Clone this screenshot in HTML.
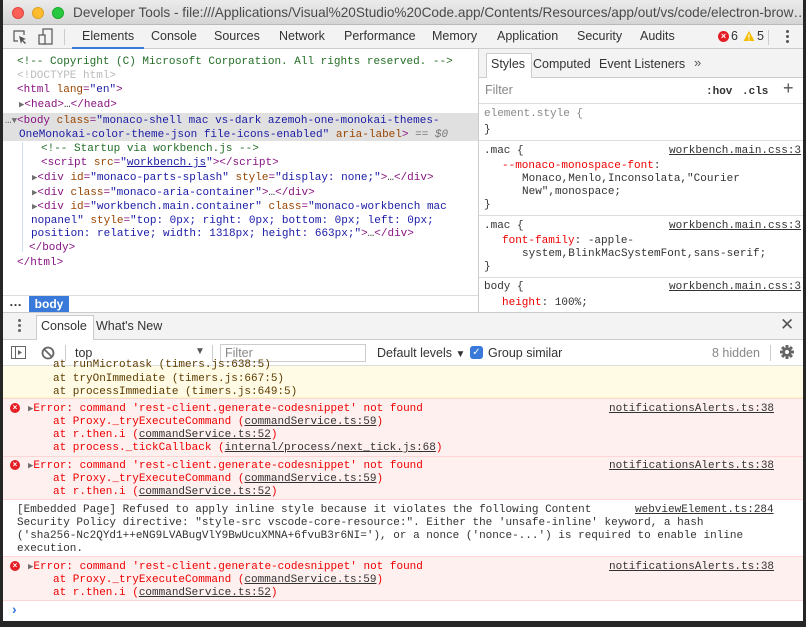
<!DOCTYPE html>
<html><head><meta charset="utf-8">
<style>
*{box-sizing:border-box;margin:0;padding:0}
body{width:806px;height:627px;background:#262626;overflow:hidden;position:relative;font-family:"Liberation Sans",sans-serif;font-size:12px;color:#333}
.a{position:absolute;white-space:pre}
.m{font-family:"Liberation Mono",monospace;font-size:11px;line-height:14px;height:14px;padding-top:1px}
.win{position:absolute;left:3px;top:0;width:800px;height:621px;background:#fff;overflow:hidden}
.t{color:#881280}.n{color:#994500}.v{color:#1a1aa6}.c{color:#236e25}.g{color:#a894a6}
.r{color:#e00}.u{text-decoration:underline}
.tri{font-size:9px;color:#6e6e6e}
.sec{position:absolute;left:476px;width:324px;border-bottom:1px solid #ddd}
.lk{color:#333;text-decoration:underline}
</style></head><body>
<div class="win">
<!-- title bar -->
<div class="a" style="left:0;top:0;width:800px;height:25px;background:linear-gradient(#ebebeb,#d5d5d5);border-bottom:1px solid #b9b9b9"></div>
<div class="a" style="left:9px;top:7px;width:12px;height:12px;border-radius:6px;background:#fc5f57;border:1px solid #e0443e"></div>
<div class="a" style="left:29px;top:7px;width:12px;height:12px;border-radius:6px;background:#fdbc2e;border:1px solid #dea123"></div>
<div class="a" style="left:49px;top:7px;width:12px;height:12px;border-radius:6px;background:#28c840;border:1px solid #1aab29"></div>
<div class="a" style="left:70px;top:5px;font-size:13.6px;color:#4a4a4a">Developer Tools - file:///Applications/Visual%20Studio%20Code.app/Contents/Resources/app/out/vs/code/electron-brow…</div>
<!-- tab bar -->
<div class="a" style="left:0;top:25px;width:800px;height:24px;background:#f3f3f3;border-bottom:1px solid #ccc"></div>
<svg class="a" style="left:9px;top:29px" width="16" height="16" viewBox="0 0 16 16"><path d="M6 12H2V2h10v4" fill="none" stroke="#555" stroke-width="1.2"/><path d="M7 7l7 3-3 1 3 3-1 1-3-3-1 3z" fill="#555"/></svg>
<svg class="a" style="left:35px;top:28px" width="16" height="18" viewBox="0 0 16 18"><rect x="5" y="1" width="9" height="15" fill="none" stroke="#555" stroke-width="1.2"/><rect x="1" y="7" width="6" height="9" fill="#f3f3f3" stroke="#555" stroke-width="1.2"/></svg>
<div class="a" style="left:61px;top:29px;width:1px;height:16px;background:#ccc"></div>
<div class="a" style="left:79px;top:29px;font-size:12.5px;color:#333">Elements</div>
<div class="a" style="left:69px;top:47px;width:72px;height:2px;background:#3879d9"></div>
<div class="a" style="left:148px;top:29px;font-size:12.5px;color:#333">Console</div>
<div class="a" style="left:211px;top:29px;font-size:12.5px;color:#333">Sources</div>
<div class="a" style="left:276px;top:29px;font-size:12.5px;color:#333">Network</div>
<div class="a" style="left:341px;top:29px;font-size:12.5px;color:#333">Performance</div>
<div class="a" style="left:429px;top:29px;font-size:12.5px;color:#333">Memory</div>
<div class="a" style="left:494px;top:29px;font-size:12.5px;color:#333">Application</div>
<div class="a" style="left:574px;top:29px;font-size:12.5px;color:#333">Security</div>
<div class="a" style="left:637px;top:29px;font-size:12.5px;color:#333">Audits</div>
<div class="a" style="left:715px;top:31px;width:11px;height:11px;border-radius:6px;background:#e31e25;color:#fff;font-size:9px;line-height:11px;text-align:center;font-weight:bold">×</div>
<div class="a" style="left:728px;top:29px;font-size:12.5px">6</div>
<svg class="a" style="left:740px;top:30px" width="12" height="12"><path d="M6 1L11.5 11H.5z" fill="#f4bd00"/><text x="6" y="10.5" font-size="8" text-anchor="middle" fill="#fff" font-family="Liberation Sans" font-weight="bold">!</text></svg>
<div class="a" style="left:754px;top:29px;font-size:12.5px">5</div>
<div class="a" style="left:765px;top:30px;width:1px;height:15px;background:#ccc"></div>
<div class="a" style="left:783px;top:30px;width:3px;height:3px;border-radius:2px;background:#555;box-shadow:0 5px #555,0 10px #555"></div>
<!-- elements panel -->
<div class="a" style="left:0;top:113px;width:475px;height:28px;background:#e0e0e0"></div>
<div class="a m c" style="left:14px;top:54px">&lt;!-- Copyright (C) Microsoft Corporation. All rights reserved. --&gt;</div>
<div class="a m" style="left:14px;top:68px;color:#bbb">&lt;!DOCTYPE html&gt;</div>
<div class="a m" style="left:14px;top:82px"><span class="t">&lt;html</span> <span class="n">lang</span><span class="t">=</span><span class="v">"en"</span><span class="t">&gt;</span></div>
<div class="a m" style="left:16px;top:97px"><span class="tri">▶</span><span class="t">&lt;head&gt;</span>…<span class="t">&lt;/head&gt;</span></div>
<div class="a m" style="left:2px;top:113px;color:#666">…<span class="tri">▼</span><span class="t">&lt;body</span> <span class="n">class</span><span class="t">=</span><span class="v">"monaco-shell mac vs-dark azemoh-one-monokai-themes-</span></div>
<div class="a m" style="left:16px;top:127px"><span class="v">OneMonokai-color-theme-json file-icons-enabled"</span> <span class="n">aria-label</span><span class="t">&gt;</span> <span style="color:#777">== <i>$0</i></span></div>
<div class="a" style="left:19px;top:142px;width:1px;height:110px;background:#cfe0f7"></div>
<div class="a m c" style="left:38px;top:141px">&lt;!-- Startup via workbench.js --&gt;</div>
<div class="a m" style="left:38px;top:155px"><span class="t">&lt;script</span> <span class="n">src</span><span class="t">=</span><span class="v">"<span class="u" style="color:#1a1aa6">workbench.js</span>"</span><span class="t">&gt;&lt;/script&gt;</span></div>
<div class="a m" style="left:29px;top:170px"><span class="tri">▶</span><span class="t">&lt;div</span> <span class="n">id</span><span class="t">=</span><span class="v">"monaco-parts-splash"</span> <span class="n">style</span><span class="t">=</span><span class="v">"display: none;"</span><span class="t">&gt;</span>…<span class="t">&lt;/div&gt;</span></div>
<div class="a m" style="left:29px;top:185px"><span class="tri">▶</span><span class="t">&lt;div</span> <span class="n">class</span><span class="t">=</span><span class="v">"monaco-aria-container"</span><span class="t">&gt;</span>…<span class="t">&lt;/div&gt;</span></div>
<div class="a m" style="left:29px;top:199px"><span class="tri">▶</span><span class="t">&lt;div</span> <span class="n">id</span><span class="t">=</span><span class="v">"workbench.main.container"</span> <span class="n">class</span><span class="t">=</span><span class="v">"monaco-workbench mac</span></div>
<div class="a m v" style="left:28px;top:213px">nopanel" <span class="n">style</span><span class="t">=</span>"top: 0px; right: 0px; bottom: 0px; left: 0px;</div>
<div class="a m v" style="left:28px;top:226px">position: relative; width: 1318px; height: 663px;"<span class="t">&gt;</span><span style="color:#333">…</span><span class="t">&lt;/div&gt;</span></div>
<div class="a m t" style="left:26px;top:240px">&lt;/body&gt;</div>
<div class="a m t" style="left:14px;top:255px">&lt;/html&gt;</div>
<!-- breadcrumb -->
<div class="a" style="left:0;top:295px;width:476px;height:1px;background:#ddd"></div>
<div class="a" style="left:6px;top:294px;font-size:13px;font-weight:bold;color:#333">…</div>
<div class="a" style="left:26px;top:296px;width:40px;height:16px;background:#3879d9;color:#fff;font-size:12px;line-height:16px;text-align:center;font-weight:bold">body</div>
<!-- splitter -->
<div class="a" style="left:475px;top:49px;width:1px;height:263px;background:#ccc"></div>
<!-- styles pane -->
<div class="a" style="left:476px;top:49px;width:324px;height:29px;background:#f3f3f3;border-bottom:1px solid #ccc"></div>
<div class="a" style="left:483px;top:53px;width:46px;height:25px;background:#fff;border:1px solid #ccc;border-bottom:none"></div>
<div class="a" style="left:488px;top:57px;font-size:12.5px">Styles</div>
<div class="a" style="left:530px;top:57px;font-size:12.5px">Computed</div>
<div class="a" style="left:596px;top:57px;font-size:12.5px">Event Listeners</div>
<div class="a" style="left:691px;top:55px;font-size:13px;color:#555">»</div>
<div class="sec" style="top:78px;height:26px"></div>
<div class="a" style="left:482px;top:83px;font-size:12.5px;color:#888">Filter</div>
<div class="a m" style="left:703px;top:84px;font-weight:bold;color:#333">:hov</div>
<div class="a m" style="left:739px;top:84px;font-weight:bold;color:#333">.cls</div>
<div class="a" style="left:780px;top:78px;font-size:18px;color:#555">+</div>
<div class="sec" style="top:104px;height:37px"></div>
<div class="a m" style="left:481px;top:106px;color:#888">element.style {</div>
<div class="a m" style="left:481px;top:122px">}</div>
<div class="sec" style="top:141px;height:75px"></div>
<div class="a m" style="left:481px;top:143px">.mac {</div>
<div class="a m lk" style="left:666px;top:143px">workbench.main.css:3</div>
<div class="a m" style="left:499px;top:158px"><span class="r">--monaco-monospace-font</span>:</div>
<div class="a m" style="left:519px;top:171px">Monaco,Menlo,Inconsolata,"Courier</div>
<div class="a m" style="left:519px;top:184px">New",monospace;</div>
<div class="a m" style="left:481px;top:197px">}</div>
<div class="sec" style="top:216px;height:62px"></div>
<div class="a m" style="left:481px;top:218px">.mac {</div>
<div class="a m lk" style="left:666px;top:218px">workbench.main.css:3</div>
<div class="a m" style="left:499px;top:233px"><span class="r">font-family</span>: -apple-</div>
<div class="a m" style="left:519px;top:246px">system,BlinkMacSystemFont,sans-serif;</div>
<div class="a m" style="left:481px;top:259px">}</div>
<div class="a m" style="left:481px;top:279px">body {</div>
<div class="a m lk" style="left:666px;top:279px">workbench.main.css:3</div>
<div class="a m" style="left:499px;top:295px"><span class="r">height</span>: 100%;</div>
<!-- drawer -->
<div class="a" style="left:0;top:312px;width:800px;height:28px;background:#f3f3f3;border-top:1px solid #ccc;border-bottom:1px solid #ccc"></div>
<div class="a" style="left:15px;top:319px;width:3px;height:3px;border-radius:2px;background:#666;box-shadow:0 5px #666,0 10px #666"></div>
<div class="a" style="left:33px;top:315px;width:58px;height:25px;background:#fff;border:1px solid #ccc;border-bottom:none"></div>
<div class="a" style="left:38px;top:319px;font-size:12.5px">Console</div>
<div class="a" style="left:93px;top:319px;font-size:12.5px">What's New</div>
<div class="a" style="left:777px;top:315px;font-size:17px;color:#555">✕</div>
<!-- toolbar -->
<div class="a" style="left:0;top:340px;width:800px;height:26px;border-bottom:1px solid #ddd"></div>
<svg class="a" style="left:8px;top:346px" width="16" height="14"><rect x=".5" y=".5" width="14" height="12" fill="none" stroke="#666"/><line x1="4.5" y1="1" x2="4.5" y2="13" stroke="#666"/><path d="M7 4l4 2.5-4 2.5z" fill="#666"/></svg>
<svg class="a" style="left:38px;top:346px" width="14" height="14"><circle cx="7" cy="7" r="5.5" fill="none" stroke="#666" stroke-width="1.8"/><line x1="3" y1="3" x2="11" y2="11" stroke="#666" stroke-width="1.8"/></svg>
<div class="a" style="left:62px;top:345px;width:1px;height:16px;background:#ccc"></div>
<div class="a" style="left:72px;top:346px;font-size:12.5px">top</div>
<div class="a" style="left:192px;top:346px;font-size:10px;color:#555">▼</div>
<div class="a" style="left:209px;top:345px;width:1px;height:16px;background:#ccc"></div>
<div class="a" style="left:217px;top:344px;width:146px;height:18px;border:1px solid #ccc"></div>
<div class="a" style="left:222px;top:346px;font-size:12.5px;color:#888">Filter</div>
<div class="a" style="left:374px;top:346px;font-size:12.5px">Default levels <span style="font-size:10px">▼</span></div>
<div class="a" style="left:467px;top:346px;width:13px;height:13px;border-radius:3px;background:#3879d9;color:#fff;font-size:10px;line-height:13px;text-align:center">✓</div>
<div class="a" style="left:485px;top:346px;font-size:12.5px">Group similar</div>
<div class="a" style="left:709px;top:346px;font-size:12.5px;color:#888">8 hidden</div>
<div class="a" style="left:767px;top:345px;width:1px;height:16px;background:#ccc"></div>
<svg class="a" style="left:777px;top:345px" width="14" height="14" viewBox="0 0 14 14"><g fill="#666"><circle cx="7" cy="7" r="4.5"/><rect x="5.5" y="0" width="3" height="14"/><rect x="0" y="5.5" width="14" height="3"/><rect x="5.5" y="0" width="3" height="14" transform="rotate(45 7 7)"/><rect x="5.5" y="0" width="3" height="14" transform="rotate(-45 7 7)"/></g><circle cx="7" cy="7" r="2" fill="#fff"/></svg>
<!-- messages -->
<div class="a" style="left:0;top:366px;width:800px;height:32px;background:#fffbe5;border-bottom:1px solid #fff5c2"></div>
<div class="a m" style="left:50px;top:357px;color:#5c3c00">at runMicrotask (timers.js:638:5)</div>
<div class="a m" style="left:50px;top:371px;color:#5c3c00">at tryOnImmediate (timers.js:667:5)</div>
<div class="a m" style="left:50px;top:384px;color:#5c3c00">at processImmediate (timers.js:649:5)</div>

<div class="a" style="left:0;top:398px;width:800px;height:59px;background:#fff0f0;border-bottom:1px solid #ffd6d6;border-top:1px solid #ffd6d6"></div>
<div class="a" style="left:7px;top:403px;width:10px;height:10px;border-radius:5px;background:#e31e25;color:#fff;font-size:8px;line-height:10px;text-align:center;font-weight:bold">×</div>
<div class="a m r" style="left:25px;top:401px"><span class="tri">▶</span>Error: command 'rest-client.generate-codesnippet' not found</div>
<div class="a m lk" style="left:606px;top:401px">notificationsAlerts.ts:38</div>
<div class="a m r" style="left:50px;top:414px">at Proxy._tryExecuteCommand (<span class="lk">commandService.ts:59</span>)</div>
<div class="a m r" style="left:50px;top:427px">at r.then.i (<span class="lk">commandService.ts:52</span>)</div>
<div class="a m r" style="left:50px;top:440px">at process._tickCallback (<span class="lk">internal/process/next_tick.js:68</span>)</div>

<div class="a" style="left:0;top:457px;width:800px;height:43px;background:#fff0f0;border-bottom:1px solid #ffd6d6"></div>
<div class="a" style="left:7px;top:460px;width:10px;height:10px;border-radius:5px;background:#e31e25;color:#fff;font-size:8px;line-height:10px;text-align:center;font-weight:bold">×</div>
<div class="a m r" style="left:25px;top:458px"><span class="tri">▶</span>Error: command 'rest-client.generate-codesnippet' not found</div>
<div class="a m lk" style="left:606px;top:458px">notificationsAlerts.ts:38</div>
<div class="a m r" style="left:50px;top:471px">at Proxy._tryExecuteCommand (<span class="lk">commandService.ts:59</span>)</div>
<div class="a m r" style="left:50px;top:484px">at r.then.i (<span class="lk">commandService.ts:52</span>)</div>

<div class="a" style="left:0;top:500px;width:800px;height:57px;border-bottom:1px solid #ffd6d6"></div>
<div class="a m" style="left:14px;top:502px;color:#333">[Embedded Page] Refused to apply inline style because it violates the following Content</div>
<div class="a m lk" style="left:632px;top:502px">webviewElement.ts:284</div>
<div class="a m" style="left:14px;top:515px;color:#333">Security Policy directive: "style-src vscode-core-resource:". Either the 'unsafe-inline' keyword, a hash</div>
<div class="a m" style="left:14px;top:528px;color:#333">('sha256-Nc2QYd1++eNG9LVABugVlY9BwUcuXMNA+6fvuB3r6NI='), or a nonce ('nonce-...') is required to enable inline</div>
<div class="a m" style="left:14px;top:541px;color:#333">execution.</div>

<div class="a" style="left:0;top:557px;width:800px;height:44px;background:#fff0f0;border-bottom:1px solid #ffd6d6"></div>
<div class="a" style="left:7px;top:561px;width:10px;height:10px;border-radius:5px;background:#e31e25;color:#fff;font-size:8px;line-height:10px;text-align:center;font-weight:bold">×</div>
<div class="a m r" style="left:25px;top:559px"><span class="tri">▶</span>Error: command 'rest-client.generate-codesnippet' not found</div>
<div class="a m lk" style="left:606px;top:559px">notificationsAlerts.ts:38</div>
<div class="a m r" style="left:50px;top:572px">at Proxy._tryExecuteCommand (<span class="lk">commandService.ts:59</span>)</div>
<div class="a m r" style="left:50px;top:585px">at r.then.i (<span class="lk">commandService.ts:52</span>)</div>
<div class="a" style="left:9px;top:601px;font-size:14px;color:#3879d9;font-weight:bold">›</div>
</div>
</body></html>
